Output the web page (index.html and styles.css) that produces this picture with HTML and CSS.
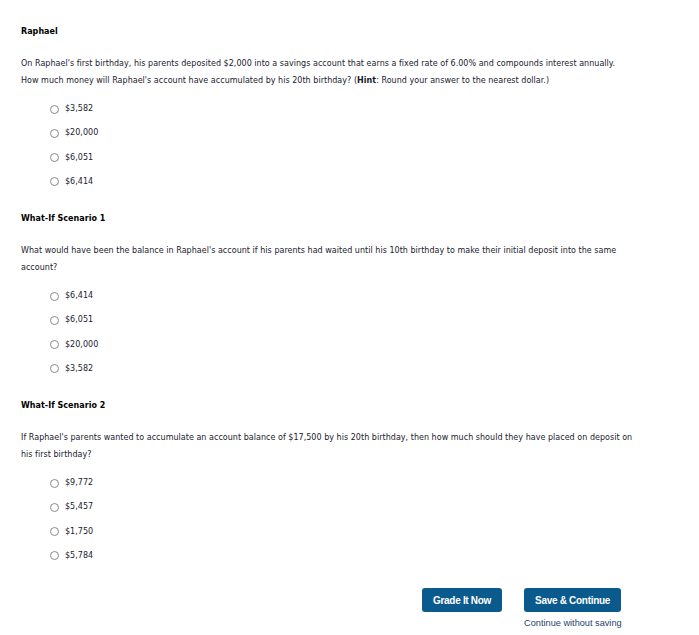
FILE: index.html
```html
<!DOCTYPE html>
<html lang="en">
<head>
    <meta charset="UTF-8">
    <title>Raphael - Time Value of Money</title>
    <link rel="stylesheet" href="styles.css">
</head>
<body>
    <div class="problem">
        <h2 class="problem-title">Raphael</h2>
        <p class="question">On Raphael's first birthday, his parents deposited $2,000 into a savings account that earns a fixed rate of 6.00% and compounds interest annually.<br>How much money will Raphael's account have accumulated by his 20th birthday? (<b>Hint</b>: Round your answer to the nearest dollar.)</p>
        <ul class="choices">
            <li><label><input type="radio" name="q1"> $3,582</label></li>
            <li><label><input type="radio" name="q1"> $20,000</label></li>
            <li><label><input type="radio" name="q1"> $6,051</label></li>
            <li><label><input type="radio" name="q1"> $6,414</label></li>
        </ul>

        <h2 class="problem-title">What-If Scenario 1</h2>
        <p class="question">What would have been the balance in Raphael's account if his parents had waited until his 10th birthday to make their initial deposit into the same account?</p>
        <ul class="choices">
            <li><label><input type="radio" name="q2"> $6,414</label></li>
            <li><label><input type="radio" name="q2"> $6,051</label></li>
            <li><label><input type="radio" name="q2"> $20,000</label></li>
            <li><label><input type="radio" name="q2"> $3,582</label></li>
        </ul>

        <h2 class="problem-title">What-If Scenario 2</h2>
        <p class="question">If Raphael's parents wanted to accumulate an account balance of $17,500 by his 20th birthday, then how much should they have placed on deposit on his first birthday?</p>
        <ul class="choices">
            <li><label><input type="radio" name="q3"> $9,772</label></li>
            <li><label><input type="radio" name="q3"> $5,457</label></li>
            <li><label><input type="radio" name="q3"> $1,750</label></li>
            <li><label><input type="radio" name="q3"> $5,784</label></li>
        </ul>
    </div>

    <div class="actions">
        <button type="button" class="btn">Grade It Now</button>
        <div class="save-group">
            <button type="button" class="btn">Save &amp; Continue</button>
            <a href="#" class="skip-link">Continue without saving</a>
        </div>
    </div>
</body>
</html>
```

FILE: styles.css
```css
body {
    margin: 0;
    padding: 26px 0 0 21px;
    font-family: "DejaVu Sans", Verdana, sans-serif;
    font-size: 8px;
    letter-spacing: 0.03px;
    color: #1a1a2e;
    background: #fff;
}
.problem {
    width: 620px;
}
.problem-title {
    font-size: 8px;
    font-weight: bold;
    color: #000;
    margin: 0 0 17px;
    line-height: 12px;
}
.question {
    margin: 0;
    line-height: 17px;
}
.choices {
    list-style: none;
    margin: 14px 0 13px;
    padding: 0 0 0 29px;
}
.choices li {
    height: 24.25px;
    line-height: 12px;
}
.choices label {
    display: flex;
    align-items: center;
    gap: 6px;
}
.choices input[type="radio"] {
    -webkit-appearance: none;
    appearance: none;
    width: 9px;
    height: 9px;
    margin: 0;
    border: 1px solid #8a8a8a;
    border-radius: 50%;
    background: #fff;
}
.actions {
    display: flex;
    gap: 22px;
    margin: 14px 0 0 401px;
    letter-spacing: normal;
}
.save-group {
    display: flex;
    flex-direction: column;
    align-items: flex-start;
}
.btn {
    background: #0b5a8e;
    color: #fff;
    border: none;
    border-radius: 3px;
    height: 24px;
    padding: 0 11px;
    font-family: "Liberation Sans", Arial, sans-serif;
    font-weight: bold;
    font-size: 10px;
    letter-spacing: -0.3px;
    cursor: pointer;
}
.skip-link {
    margin-top: 6px;
    font-family: "Liberation Sans", Arial, sans-serif;
    font-size: 9.2px;
    color: #1c3f6e;
    text-decoration: none;
}
```
